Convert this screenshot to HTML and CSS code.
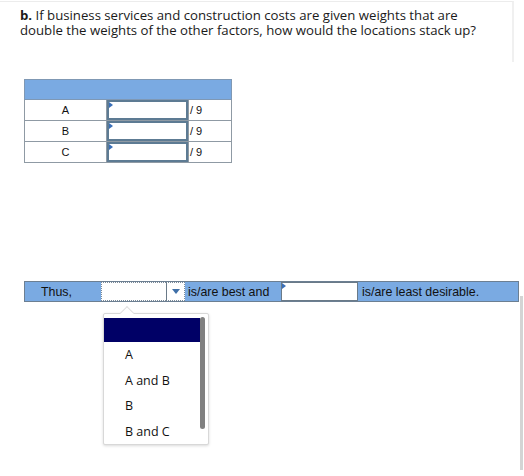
FILE: index.html
```html
<!DOCTYPE html>
<html>
<head>
<meta charset="utf-8">
<link rel="stylesheet" href="styles.css">
</head>
<body>
<div class="frame"></div>
<div class="page">
  <p class="question"><b>b.</b> If business services and construction costs are given weights that are double the weights of the other factors, how would the locations stack up?</p>

  <table class="grid">
    <tr class="head"><td colspan="3"></td></tr>
    <tr><td class="loc">A</td><td class="cell"><div class="inp"><span class="mark"></span></div></td><td class="score">/ 9</td></tr>
    <tr><td class="loc">B</td><td class="cell"><div class="inp"><span class="mark"></span></div></td><td class="score">/ 9</td></tr>
    <tr><td class="loc">C</td><td class="cell"><div class="inp"><span class="mark"></span></div></td><td class="score">/ 9</td></tr>
  </table>

  <div class="thus">
    <span class="thus-label">Thus,</span>
    <div class="select">
      <div class="select-box"></div>
      <div class="select-arrow"><span class="tri"></span></div>
      <div class="menu">
        <div class="notch"></div>
        <div class="opt selected"></div>
        <div class="opt">A</div>
        <div class="opt">A and B</div>
        <div class="opt">B</div>
        <div class="opt">B and C</div>
        <div class="scroll"></div>
      </div>
    </div>
    <span class="txt best">is/are best and</span>
    <div class="inp2"><span class="mark"></span></div>
    <span class="txt">is/are least desirable.</span>
  </div>
  <div class="rail"></div>
</div>
</body>
</html>
```

FILE: styles.css
```css
html, body { margin: 0; padding: 0; background: #fff; }
body { width: 524px; height: 476px; overflow: hidden; position: relative; }
.frame {
  position: absolute;
  left: 0; top: 1px;
  width: 512px; height: 60px;
  border-top: 1px solid #ececec;
  border-right: 2px solid #f0f0f0;
}
.page {
  padding: 8px 0 0 20px;
  font-family: "Open Sans", "DejaVu Sans", sans-serif;
  color: #1a1a1a;
}
.question {
  margin: 0;
  font-size: 13.2px;
  line-height: 15px;
  width: 462px;
}
.question b { font-weight: 700; }

.grid {
  margin: 41px 0 0 4px;
  border-collapse: collapse;
  font-family: "Liberation Sans", Arial, sans-serif;
  font-size: 11px;
  color: #111;
}
.grid td { border: 1px solid #8f9aa4; padding: 0; height: 19px; }
.grid .head td { background: #7aaae2; height: 19px; border-color: #7f98b4; }
.grid .loc { width: 81px; text-align: center; }
.grid .cell { width: 81px; }
.grid .score { width: 41px; padding-left: 1px; }
.inp {
  position: relative;
  height: 16px;
  border: 2px solid #5d7b93;
  background: #fff;
}
.mark {
  position: absolute;
  left: 0; top: 0;
  width: 0; height: 0;
  border-top: 3px solid transparent;
  border-bottom: 3px solid transparent;
  border-left: 4px solid #3a6fb8;
}

.thus {
  margin: 118px 0 0 4px;
  width: 493px;
  height: 19px;
  background: #7aaae2;
  border: 1px solid #6c7f92;
  display: flex;
  align-items: center;
  font-family: "Liberation Sans", Arial, sans-serif;
  font-size: 12.4px;
  color: #111;
}
.thus > * { flex-shrink: 0; }
.thus-label { width: 76px; padding-left: 16px; box-sizing: border-box; }
.select { position: relative; display: flex; height: 19px; width: 84px; }
.select-box {
  width: 64px;
  height: 17px;
  background: #fff;
  border: 1px dotted #7a8a99;
  border-right: none;
}
.select-arrow {
  width: 17px;
  height: 17px;
  border: 1px dotted #7a8a99;
  border-left: 1px solid #6a7a88;
  background: #fff;
  display: flex;
  align-items: center;
  justify-content: center;
}
.tri {
  width: 0; height: 0;
  border-left: 4px solid transparent;
  border-right: 4px solid transparent;
  border-top: 5px solid #3f6fa8;
}
.txt.best { margin-left: 3px; width: 93px; }
.inp2 {
  position: relative;
  width: 75px;
  height: 17px;
  background: #fff;
  border: 1px solid #6a7a88;
  margin-right: 4px;
}
.menu {
  position: absolute;
  left: 2px;
  top: 31px;
  width: 106px;
  height: 132px;
  background: #fff;
  border: 1px solid #d8d8d8;
  border-radius: 2px;
  box-shadow: 0 1px 3px rgba(0,0,0,0.15);
  padding-top: 4px;
  box-sizing: border-box;
  font-family: "Open Sans", "DejaVu Sans", sans-serif;
  font-size: 12.5px;
  color: #111;
  z-index: 5;
}
.notch {
  position: absolute;
  left: 18px;
  top: -6px;
  width: 9px; height: 9px;
  background: #fff;
  border-left: 1px solid #e0e0e0;
  border-top: 1px solid #e0e0e0;
  transform: rotate(45deg);
}
.opt { height: 25.5px; line-height: 25px; padding-left: 21px; position: relative; }
.opt.selected { background: #000066; height: 24px; margin-right: 8px; }
.scroll {
  position: absolute;
  right: 3px;
  top: 3px;
  width: 5px;
  height: 112px;
  border-radius: 3px;
  background: #808080;
}
.rail {
  position: absolute;
  right: 1px;
  top: 296px;
  width: 3px;
  height: 174px;
  background: #d4d4d4;
}
```
